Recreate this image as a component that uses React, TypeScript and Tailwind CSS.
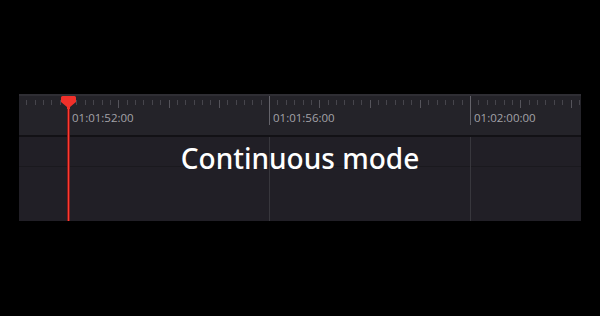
const MAJORS = [49, 250, 451];
const LABELS = ["01:01:52:00", "01:01:56:00", "01:02:00:00"];
const STEP = 201 / 24;

function Ruler() {
  const ticks: { x: number; tall: boolean }[] = [];
  const start = MAJORS[0] - STEP * Math.floor(MAJORS[0] / STEP);
  for (let i = 0; start + i * STEP < 560; i++) {
    const x = start + i * STEP;
    const rel = Math.round((x - MAJORS[0]) / STEP);
    if (rel % 24 === 0) continue;
    ticks.push({ x, tall: ((rel % 6) + 6) % 6 === 0 });
  }
  return (
    <svg className="absolute inset-0" width="562" height="40">
      {ticks.map((t, i) => (
        <rect
          key={i}
          x={Math.round(t.x)}
          y={4}
          width={1}
          height={t.tall ? 8 : 5}
          fill={t.tall ? "#55545b" : "#46454c"}
        />
      ))}
      {MAJORS.map((x) => (
        <rect key={x} x={x} y={0} width={1} height={29} fill="#64636a" />
      ))}
    </svg>
  );
}

export default function App() {
  return (
    <div className="h-[316px] w-[600px] bg-black pt-[94px] px-[19px] font-['Open_Sans',sans-serif]">
      <div className="relative flex h-[127px] w-[562px] flex-col bg-[#211f26]">
        <div className="h-[2px] bg-[#2f2e34]" />
        {/* ruler */}
        <div className="relative h-[39px] bg-[#242329]">
          <Ruler />
          {LABELS.map((label, i) => (
            <span
              key={label}
              className="absolute top-[14px] text-[11.5px] leading-[15px] text-[#a3a2a8]"
              style={{ left: MAJORS[i] + 4 }}
            >
              {label}
            </span>
          ))}
        </div>
        <div className="h-[2px] bg-[#121115]" />
        {/* tracks */}
        <div className="relative flex flex-1 flex-col">
          <div className="h-[30px] border-b border-[#1a191e]" />
          <div className="flex-1" />
          {MAJORS.slice(1).map((x) => (
            <div key={x} className="absolute top-0 bottom-0 w-px bg-[#38373d]" style={{ left: x }} />
          ))}
        </div>

        <div className="absolute left-0 right-0 top-[46px] text-center font-['Noto_Sans',sans-serif] text-[28px] font-medium leading-[36px] text-white">
          Continuous mode
        </div>

        {/* playhead */}
        <div className="absolute top-[2px] bottom-0 left-[48px] w-[3px] bg-[#8b1a1a]">
          <div className="mx-auto h-full w-px bg-[#ff3b30]" />
        </div>
        <svg className="absolute left-[42px] top-[2px]" width="15" height="13" viewBox="0 0 15 13">
          <path d="M1.5 0 H13.5 Q15 0 15 1.5 V6 L9 11 V13 H6 V11 L0 6 V1.5 Q0 0 1.5 0 Z" fill="#f0302a" />
        </svg>
      </div>
    </div>
  );
}
